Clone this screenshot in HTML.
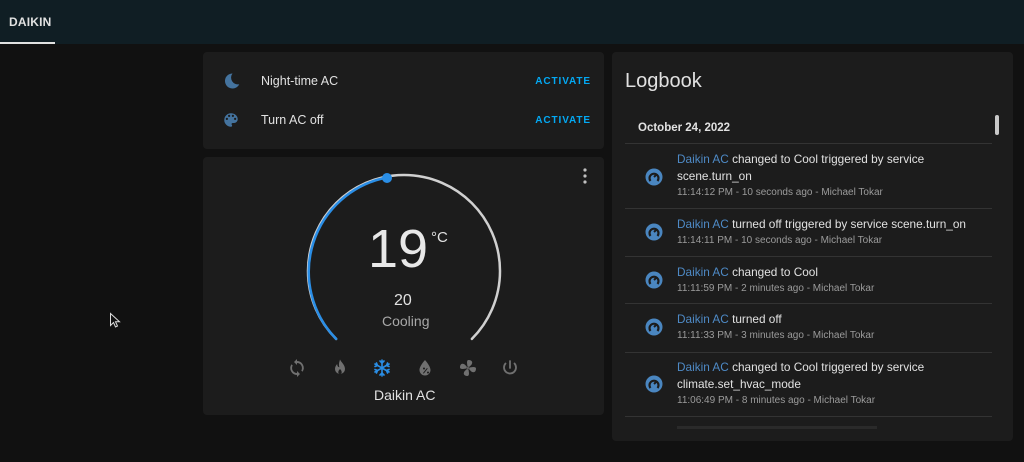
<!DOCTYPE html>
<html><head><meta charset="utf-8"><style>
*{margin:0;padding:0;box-sizing:border-box}
body{width:1024px;height:462px;background:#111111;font-family:"Liberation Sans",sans-serif;position:relative;overflow:hidden;color:#e1e1e1}
.a{position:absolute;white-space:nowrap}
.hdr{left:0;top:0;width:1024px;height:44px;background:#101e24}
.card{background:#1c1c1c;border-radius:4px;position:absolute}
.act{color:#03a9f4;font-size:10px;font-weight:bold;letter-spacing:0.9px;right:433px}
.sep{position:absolute;left:625px;width:367px;height:1px;background:#333}
.lt{font-size:11.8px;color:#e1e1e1;left:677px}
.lt b{font-weight:normal;color:#4e8ac6}
.mt{font-size:10px;color:#9b9b9b;left:677px}
</style></head><body>
<div class="a hdr"></div>
<div class="a" style="left:9px;top:15px;font-size:12px;color:#e1e1e1;font-weight:bold;letter-spacing:.2px">DAIKIN</div>
<div class="a" style="left:0;top:42px;width:55px;height:2px;background:#e1e1e1"></div>

<div class="card" style="left:203px;top:52px;width:401px;height:97px"></div>
<svg class="a" style="left:222px;top:72px" width="18" height="18" viewBox="0 0 24 24"><path fill="#44739e" d="M12 2a10 10 0 1 0 9 14.3A9 9 0 0 1 12 2z" transform="translate(2 0)"/></svg>
<div class="a" style="left:261px;top:74px;font-size:12.5px">Night-time AC</div>
<div class="a act" style="top:76px">ACTIVATE</div>
<svg class="a" style="left:222px;top:111px" width="18" height="18" viewBox="0 0 24 24"><path fill="#44739e" d="M17.5 12a1.5 1.5 0 0 1-1.5-1.5A1.5 1.5 0 0 1 17.5 9a1.5 1.5 0 0 1 1.5 1.5 1.5 1.5 0 0 1-1.5 1.5m-3-4A1.5 1.5 0 0 1 13 6.5 1.5 1.5 0 0 1 14.5 5 1.5 1.5 0 0 1 16 6.5 1.5 1.5 0 0 1 14.5 8m-5 0A1.5 1.5 0 0 1 8 6.5 1.5 1.5 0 0 1 9.5 5 1.5 1.5 0 0 1 11 6.5 1.5 1.5 0 0 1 9.5 8m-3 4A1.5 1.5 0 0 1 5 10.5 1.5 1.5 0 0 1 6.5 9 1.5 1.5 0 0 1 8 10.5 1.5 1.5 0 0 1 6.5 12M12 3a9 9 0 0 0-9 9 9 9 0 0 0 9 9 1.5 1.5 0 0 0 1.5-1.5c0-.39-.15-.74-.39-1-.23-.27-.38-.62-.38-1a1.5 1.5 0 0 1 1.5-1.5H16a5 5 0 0 0 5-5c0-4.420-4.030-8-9-8z"/></svg>
<div class="a" style="left:261px;top:113px;font-size:12.5px">Turn AC off</div>
<div class="a act" style="top:115px">ACTIVATE</div>

<div class="card" style="left:203px;top:157px;width:401px;height:258px"></div>
<svg class="a" style="left:200px;top:150px" width="410" height="270">
<path d="M136.1 188.9 A96 96 0 1 1 271.9 188.9" fill="none" stroke="#d0d0d0" stroke-width="2.5" stroke-linecap="round"/>
<path d="M136.1 188.9 A96 96 0 0 1 187 27.5" fill="none" stroke="#2a8ee6" stroke-width="2.5" stroke-linecap="round"/>
<circle cx="187" cy="28" r="5" fill="#2a8ee6"/>
<circle cx="385" cy="20" r="1.6" fill="#c0c0c0"/><circle cx="385" cy="26" r="1.6" fill="#c0c0c0"/><circle cx="385" cy="32" r="1.6" fill="#c0c0c0"/>
</svg>
<div class="a" style="left:368px;top:222px;font-size:54px;color:#e8e8e8;line-height:1">19</div>
<div class="a" style="left:431px;top:229px;font-size:15px;color:#e1e1e1">°C</div>
<div class="a" style="left:394px;top:292px;font-size:16px">20</div>
<div class="a" style="left:382px;top:313px;font-size:14px;color:#a8a8a8">Cooling</div>
<svg class="a" style="left:287px;top:358px" width="236" height="20" viewBox="0 0 236 20">
<g fill="#707070">
<path d="M10 3V1L7 4l3 3V5a5 5 0 0 1 4.3 7.5l1.2 1.2A6.8 6.8 0 0 0 10 3zm0 12a5 5 0 0 1-4.3-7.5L4.5 6.3A6.8 6.8 0 0 0 10 17v2l3-3-3-3z"/>
<path transform="translate(43 0)" d="M10 1.5c1.5 3 5 5.5 5 9.5a5 5 0 0 1-10 0c0-2 1-3.8 2.2-5 0 2 1 3.2 2.2 3.2-1-3 0-5.5.6-7.7zm0 9.5c-1 1-1.7 2-1.7 3.2a1.7 1.7 0 0 0 3.4 0c0-1.2-.7-2.2-1.7-3.2z"/>
<path transform="translate(128 0)" d="M10 2s-5.5 6-5.5 10a5.5 5.5 0 0 0 11 0c0-4-5.5-10-5.5-10zm-2 8.5a1 1 0 1 1 0 .01zm4 4a1 1 0 1 1 0 .01zM8 15l4-5 .7.6-4 5z"/>
<path transform="translate(171 0)" d="M10 9a1 1 0 1 0 0 2 1 1 0 0 0 0-2zm.5-7c4.5 0 4.5 3.5 2.2 5.5L11 9c-.5-.3-1-.4-1.5-.3l-.5-4c0-1.8.5-2.7 1.5-2.7zM18 10.5c0 4.5-3.5 4.5-5.5 2.2L11 11c.3-.5.4-1 .3-1.5l4-.5c1.8 0 2.7.5 2.700 1.5zM9.5 18c-4.5 0-4.5-3.5-2.2-5.5L9 11c.5.3 1 .4 1.5.3l.5 4c0 1.8-.5 2.7-1.5 2.7zM2 9.5c0-4.5 3.5-4.5 5.5-2.2L9 9c-.3.5-.4 1-.3 1.5l-4 .5C2.9 11 2 10.5 2 9.5z"/>
</g>
<g fill="none" stroke="#707070" stroke-width="1.8" stroke-linecap="round"><path d="M223 3v7"/><path d="M218.5 5.5a6 6 0 1 0 9 0"/></g>
<g stroke="#2a8ee6" stroke-width="1.6" fill="none" stroke-linecap="round" transform="translate(95 10)">
<path d="M0-8V8M-7-4L7 4M-7 4L7-4"/><path d="M-2-7l2 2 2-2M-2 7l2-2 2 2M-7-1.5l2.5-1-1-2.5M7 1.5l-2.5 1 1 2.5M-7 1.5l2.5 1-1 2.5M7-1.5l-2.5-1 1-2.5"/></g>
</svg>
<div class="a" style="left:374px;top:387px;font-size:14px">Daikin AC</div>

<div class="card" style="left:612px;top:52px;width:401px;height:389px;overflow:hidden"></div>
<div class="a" style="left:625px;top:70px;font-size:20px;color:#e1e1e1">Logbook</div>
<div class="a" style="left:995px;top:115px;width:4px;height:20px;border-radius:2px;background:#c8c8c8"></div>
<div class="a" style="left:638px;top:122px;font-size:11.5px;font-weight:bold">October 24, 2022</div>
<div class="sep" style="top:143px"></div>
<div class="sep" style="top:208px"></div>
<div class="sep" style="top:256px"></div>
<div class="sep" style="top:303px"></div>
<div class="sep" style="top:352px"></div>
<div class="sep" style="top:416px"></div>

<div class="a lt" style="top:152px"><b>Daikin AC</b> changed to Cool triggered by service</div>
<div class="a lt" style="top:169px">scene.turn_on</div>
<div class="a mt" style="top:187px">11:14:12 PM - 10 seconds ago - Michael Tokar</div>
<div class="a lt" style="top:217px"><b>Daikin AC</b> turned off triggered by service scene.turn_on</div>
<div class="a mt" style="top:235px">11:14:11 PM - 10 seconds ago - Michael Tokar</div>
<div class="a lt" style="top:265px"><b>Daikin AC</b> changed to Cool</div>
<div class="a mt" style="top:283px">11:11:59 PM - 2 minutes ago - Michael Tokar</div>
<div class="a lt" style="top:312px"><b>Daikin AC</b> turned off</div>
<div class="a mt" style="top:330px">11:11:33 PM - 3 minutes ago - Michael Tokar</div>
<div class="a lt" style="top:360px"><b>Daikin AC</b> changed to Cool triggered by service</div>
<div class="a lt" style="top:377px">climate.set_hvac_mode</div>
<div class="a mt" style="top:395px">11:06:49 PM - 8 minutes ago - Michael Tokar</div>
<div class="a" style="left:677px;top:426px;width:200px;height:3px;background:#2a2a2a;overflow:hidden"></div>

<svg class="a" style="left:0;top:0" width="1024" height="462">
<g id="ic"><circle cx="654" cy="177" r="8.5" fill="#4a86c0"/><path d="M650.5 181a4.5 4.5 0 1 1 7 0" fill="none" stroke="#1c1c1c" stroke-width="2.2"/><path d="M654 177l2.5-2.5" stroke="#1c1c1c" stroke-width="2"/></g>
<use href="#ic" y="55"/><use href="#ic" y="103"/><use href="#ic" y="150"/><use href="#ic" y="207"/>
</svg>
<svg class="a" style="left:109px;top:312px" width="12" height="17"><path d="M1.5 1.5v12l3-3 2 4.5 2-1-2-4.3h4z" fill="#111" stroke="#ddd" stroke-width="1"/></svg>
</body></html>
